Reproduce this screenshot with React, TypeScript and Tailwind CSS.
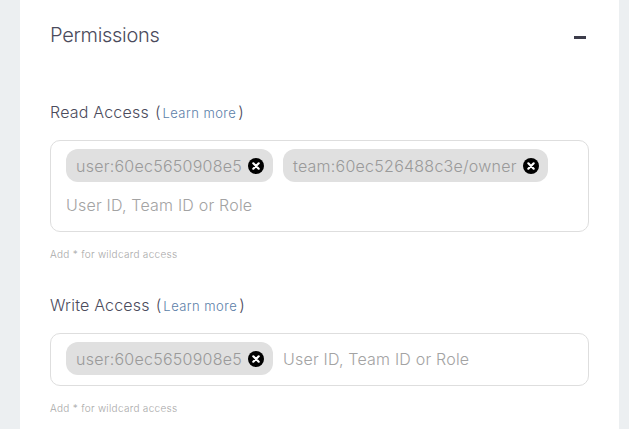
import React from "react";

const XIcon = () => (
  <svg width="16" height="16" viewBox="0 0 16 16" className="shrink-0">
    <circle cx="8" cy="8" r="8" fill="#000" />
    <path d="M5.3 5.3 L10.7 10.7 M10.7 5.3 L5.3 10.7" stroke="#fff" strokeWidth="2.2" strokeLinecap="round" />
  </svg>
);

const Chip = ({ label }: { label: string }) => (
  <div className="flex h-[33px] items-center gap-[6px] rounded-[12px] bg-[#e0e0e0] pl-[10px] pr-[9px] text-[16px] tracking-[0.25px] text-[#9a9a9a]">
    <span>{label}</span>
    <XIcon />
  </div>
);

const Field = ({
  title,
  chips,
  inline,
}: {
  title: string;
  chips: string[];
  inline: boolean;
}) => (
  <div>
    <div className="flex items-baseline text-[16px] text-[#4b4b5c]">
      <span className="tracking-[0.2px]">{title}</span>
      <span className="ml-[6px]">(</span>
      <span className="px-[2px] text-[13px] tracking-[0.45px] text-[#5b7ea8]">Learn more</span>
      <span>)</span>
    </div>
    <div className="mt-[16px] rounded-[10px] border border-[#dedede] px-[15px] pt-[8px] pb-[10px]">
      {inline ? (
        <div className="flex items-center gap-[10px]">
          {chips.map((c) => (
            <Chip key={c} label={c} />
          ))}
          <span className="text-[16px] tracking-[0.2px] text-[#a3a3a3]">User ID, Team ID or Role</span>
        </div>
      ) : (
        <div>
          <div className="flex gap-[10px]">
            {chips.map((c) => (
              <Chip key={c} label={c} />
            ))}
          </div>
          <div className="mt-[11px] mb-[4px] h-[24px] text-[16px] leading-[24px] tracking-[0.2px] text-[#a3a3a3]">User ID, Team ID or Role</div>
        </div>
      )}
    </div>
    <div className="mt-[15px] text-[10px] tracking-[0.3px] text-[#a8a8a8]">Add * for wildcard access</div>
  </div>
);

export default function App() {
  return (
    <div
      className="flex h-[429px] w-[629px] overflow-hidden bg-[#eceff1] font-light"
      style={{ fontFamily: "Inter, 'Noto Sans', sans-serif" }}
    >
      <div className="ml-[20px] w-[599px] bg-white px-[30px]">
        <div className="flex h-[70px] items-center justify-between">
          <span className="text-[20px] tracking-[-0.3px] text-[#4b4b5c]">Permissions</span>
          <div className="mr-[3px] mt-[4px] h-[3px] w-[12px] bg-[#3c3c4a]" />
        </div>
        <div className="mt-[30px] flex flex-col gap-[31px]">
          <Field title="Read Access" chips={["user:60ec5650908e5", "team:60ec526488c3e/owner"]} inline={false} />
          <Field title="Write Access" chips={["user:60ec5650908e5"]} inline={true} />
        </div>
      </div>
    </div>
  );
}
